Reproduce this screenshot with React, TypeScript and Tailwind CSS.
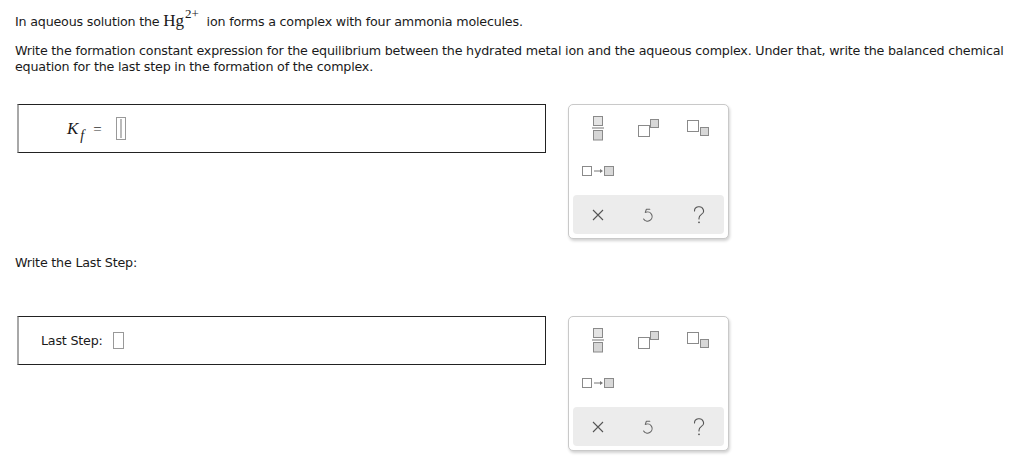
import React from 'react';

const sans = { fontFamily: '"DejaVu Sans", Verdana, sans-serif' };
const serif = { fontFamily: '"Liberation Serif", "Times New Roman", serif' };

function FracIcon() {
  return (
    <svg width="12" height="25" viewBox="0 0 12 25">
      <rect x="1.5" y="0.5" width="9" height="9" fill="#e4e4e4" stroke="#8a8a8a" />
      <line x1="0" y1="12" x2="12" y2="12" stroke="#8a8a8a" strokeWidth="1.2" />
      <rect x="1.5" y="14.5" width="9" height="9.5" fill="#d6d6d6" stroke="#8a8a8a" />
    </svg>
  );
}

function SupIcon() {
  return (
    <svg width="21" height="18" viewBox="0 0 21 18">
      <rect x="0.5" y="6.5" width="11" height="11" fill="#fff" stroke="#8a8a8a" />
      <rect x="12.5" y="0.5" width="8" height="8" fill="#d8d8d8" stroke="#8a8a8a" />
    </svg>
  );
}

function SubIcon() {
  return (
    <svg width="23" height="17" viewBox="0 0 23 17">
      <rect x="0.5" y="0.5" width="11" height="11" fill="#fff" stroke="#8a8a8a" />
      <rect x="13.5" y="7.5" width="8" height="8" fill="#d8d8d8" stroke="#8a8a8a" />
    </svg>
  );
}

function ArrowIcon() {
  return (
    <svg width="33" height="11" viewBox="0 0 33 11">
      <rect x="0.5" y="0.5" width="9" height="9" fill="#fff" stroke="#8a8a8a" />
      <line x1="12" y1="5" x2="19" y2="5" stroke="#777" />
      <path d="M18 3 L21 5 L18 7 Z" fill="#777" />
      <rect x="22.5" y="0.5" width="9" height="9" fill="#d8d8d8" stroke="#8a8a8a" />
    </svg>
  );
}

function CloseIcon() {
  return (
    <svg width="12" height="12" viewBox="0 0 12 12">
      <path d="M1 1 L11 11 M11 1 L1 11" stroke="#555" strokeWidth="1.1" fill="none" />
    </svg>
  );
}

function UndoIcon() {
  return (
    <svg width="14" height="16" viewBox="0 0 14 16">
      <path
        d="M8.8 2.3 L5.3 2.3 L4.3 5.4"
        stroke="#666"
        strokeWidth="1.1"
        fill="none"
        strokeLinecap="round"
        strokeLinejoin="round"
      />
      <path
        d="M4.7 5.3 A4.6 4.6 0 1 1 2.6 12"
        stroke="#666"
        strokeWidth="1.1"
        fill="none"
        strokeLinecap="round"
      />
    </svg>
  );
}

function HelpIcon() {
  return (
    <svg width="12" height="18" viewBox="0 0 12 18">
      <path
        d="M1.5 5 A4.5 4.2 0 1 1 8.2 8.6 C6.6 9.6 6 10.6 6 12.2 V13"
        stroke="#555"
        strokeWidth="1.1"
        fill="none"
        strokeLinecap="round"
      />
      <circle cx="6" cy="16.3" r="0.9" fill="#555" />
    </svg>
  );
}

function Toolbox() {
  return (
    <div className="flex h-[135px] w-[161px] flex-col rounded-[5px] border border-[#c9c9c9] bg-white p-[4px] shadow-[1px_2px_3px_rgba(0,0,0,0.18)]">
      <div className="grid h-[38px] grid-cols-3 items-center">
        <div className="flex justify-center"><FracIcon /></div>
        <div className="flex justify-center"><SupIcon /></div>
        <div className="flex justify-center"><SubIcon /></div>
      </div>
      <div className="grid h-[48px] grid-cols-3 items-center">
        <div className="flex justify-center"><ArrowIcon /></div>
      </div>
      <div className="grid flex-1 grid-cols-3 items-center rounded-[4px] bg-[#ececec]">
        <div className="flex justify-center"><CloseIcon /></div>
        <div className="flex justify-center"><UndoIcon /></div>
        <div className="flex justify-center"><HelpIcon /></div>
      </div>
    </div>
  );
}

function AnswerBox({ children }: { children: React.ReactNode }) {
  return (
    <div className="flex h-[49px] w-[529px] items-center border border-l-2 border-[#222] border-l-[#a8a8a8] bg-white">
      {children}
    </div>
  );
}

export default function App() {
  return (
    <div
      className="min-h-[459px] bg-white pl-[15px] text-[12.7px] leading-[16px] tracking-[-0.2px] text-[#1a1a1a]"
      style={sans}
    >
      <p className="pt-[13px]">
        In aqueous solution the{' '}
        <span className="text-[17px] tracking-normal" style={serif}>
          Hg
          <sup className="relative -top-[8px] ml-[1px] text-[13px]">2+</sup>
        </span>{' '}
        &nbsp;ion forms a complex with four ammonia molecules.
      </p>
      <p className="mt-[13px] w-[1000px]">
        Write the formation constant expression for the equilibrium between the hydrated metal ion and the aqueous
        complex. Under that, write the balanced chemical equation for the last step in the formation of the complex.
      </p>

      <div className="mt-[29px] flex items-start gap-[22px] pl-[2px]">
        <AnswerBox>
          <div className="flex items-center pl-[48px] tracking-normal" style={serif}>
            <span className="text-[17px] italic">K</span>
            <span className="relative top-[7px] ml-[2px] text-[14px] italic">f</span>
            <span className="ml-[9px] text-[15px] text-[#333]">=</span>
            <span className="relative ml-[14px] h-[23px] w-[10px] border border-[#999]">
              <span className="absolute left-[3px] top-[1px] h-[19px] w-[2px] border-x border-[#bbb]" />
            </span>
          </div>
        </AnswerBox>
        <Toolbox />
      </div>

      <p className="mt-[16px]">Write the Last Step:</p>

      <div className="mt-[45px] flex items-start gap-[22px] pl-[2px]">
        <AnswerBox>
          <div className="flex items-center pl-[22px]">
            <span>Last Step:</span>
            <span className="ml-[10px] h-[17px] w-[11px] border border-[#999]" />
          </div>
        </AnswerBox>
        <Toolbox />
      </div>
    </div>
  );
}
